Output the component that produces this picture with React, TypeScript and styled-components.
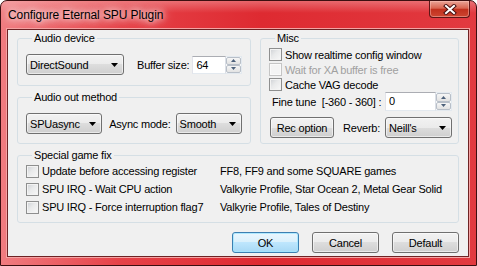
import { Fragment } from "react";
import styled, { createGlobalStyle } from "styled-components";

const GlobalStyle = createGlobalStyle`
    html, body {
        margin: 0;
        padding: 0;
        background: #fff;
    }
    body {
        font-family: "Liberation Sans", Arial, sans-serif;
        font-size: 11px;
        color: #000;
    }
`;

const Window = styled.div`
    width: 477px;
    height: 266px;
    box-sizing: border-box;
    display: flex;
    flex-direction: column;
    border: 1px solid #3c0f10;
    border-radius: 7px 7px 0 0;
    background:
        linear-gradient(to bottom, rgba(255, 255, 255, 0.28), rgba(255, 255, 255, 0) 12px),
        linear-gradient(to right, #f07c80 0%, #e64248 25%, #de2a31 55%, #e23a40 100%);
    overflow: hidden;
`;

const TitleBar = styled.div`
    height: 28px;
    flex: none;
    display: flex;
    align-items: flex-start;
    justify-content: space-between;
    padding-left: 7px;
`;

const Title = styled.div`
    font-size: 12px;
    letter-spacing: -0.1px;
    line-height: 28px;
    color: #000;
    text-shadow: 0 0 6px #fff, 0 0 10px rgba(255, 255, 255, 0.9), 0 0 14px rgba(255, 255, 255, 0.8);
`;

const CloseButton = styled.div`
    width: 41px;
    height: 17px;
    box-sizing: border-box;
    margin-right: 6px;
    display: flex;
    align-items: center;
    justify-content: center;
    border: 1px solid #5e1616;
    border-top: none;
    border-radius: 0 0 4px 4px;
    background: linear-gradient(to bottom, #eaa497 0%, #d96450 45%, #c2301d 52%, #cd4631 100%);
    box-shadow: inset 0 0 0 1px rgba(255, 200, 190, 0.45);
`;

const Client = styled.div`
    flex: 1;
    margin: 0 7px 8px 6px;
    padding: 2px 9px 0;
    display: flex;
    flex-direction: column;
    background: #f0f0f0;
    border: 1px solid #6e2224;
    box-shadow: 0 0 0 1px #f4a3a3;
`;

const Groups = styled.div`
    display: grid;
    grid-template-columns: 234px 199px;
    grid-template-rows: 54px 53px 74px;
    grid-template-areas:
        "dev misc"
        "out misc"
        "fix fix";
    column-gap: 9px;
    row-gap: 5px;
`;

const Group = styled.fieldset<{ $area: string; $top: number }>`
    grid-area: ${({ $area }) => $area};
    margin: 0;
    min-width: 0;
    box-sizing: border-box;
    padding: ${({ $top }) => $top}px 8px 0;
    border: 1px solid #d5dfe5;
    border-radius: 3px;
`;

const Legend = styled.legend`
    margin-left: 6px;
    padding: 0 2px;
    line-height: 13px;
    letter-spacing: -0.2px;
`;

const Row = styled.div`
    display: flex;
    align-items: center;
`;

const Label = styled.span<{ $gap?: number }>`
    margin-left: ${({ $gap }) => $gap ?? 0}px;
    letter-spacing: -0.2px;
    white-space: pre;
`;

const Combo = styled.div<{ $w: number; $gap?: number }>`
    width: ${({ $w }) => $w}px;
    height: 21px;
    box-sizing: border-box;
    margin-left: ${({ $gap }) => $gap ?? 0}px;
    display: flex;
    align-items: center;
    justify-content: space-between;
    padding: 0 5px 0 3px;
    border: 1px solid #707070;
    border-radius: 3px;
    background: linear-gradient(to bottom, #f2f2f2 0%, #ebebeb 50%, #dddddd 50%, #cfcfcf 100%);
    box-shadow: inset 0 0 0 1px rgba(255, 255, 255, 0.55);
    letter-spacing: -0.2px;
`;

const Edit = styled.div<{ $w: number; $h: number; $gap?: number }>`
    width: ${({ $w }) => $w}px;
    height: ${({ $h }) => $h}px;
    box-sizing: border-box;
    margin-left: ${({ $gap }) => $gap ?? 0}px;
    padding: 1px 3px 0;
    background: #fff;
    border: 1px solid;
    border-color: #abadb3 #dbdfe6 #e3e9ef #e2e3ea;
    letter-spacing: -0.2px;
    line-height: 14px;
`;

const Spin = styled.div<{ $h: number }>`
    width: 16px;
    height: ${({ $h }) => $h}px;
    box-sizing: border-box;
    display: flex;
    flex-direction: column;
    border: 1px solid #e3e9ef;
    border-left: none;
    background: #fff;
`;

const SpinHalf = styled.div`
    flex: 1;
    display: flex;
    align-items: center;
    justify-content: center;
    border: 1px solid #b8bfc8;
    border-radius: 2px;
    background: linear-gradient(to bottom, #f6f6f6, #e2e2e2);
`;

const CheckRow = styled.div<{ $h: number }>`
    height: ${({ $h }) => $h}px;
    display: flex;
    align-items: center;
`;

const Check = styled.span<{ $disabled?: boolean }>`
    width: 13px;
    height: 13px;
    box-sizing: border-box;
    flex: none;
    margin-right: 3px;
    border: 1px solid ${({ $disabled }) => ($disabled ? "#c5c5c5" : "#8e8f8f")};
    background: ${({ $disabled }) =>
        $disabled ? "#f4f4f4" : "linear-gradient(135deg, #cdd0d4 0%, #e9eaeb 45%, #f8f8f8 100%)"};
    box-shadow: inset 0 0 0 1px ${({ $disabled }) => ($disabled ? "#fafafa" : "#f3f3f3")};
`;

const CheckText = styled.span<{ $disabled?: boolean }>`
    letter-spacing: -0.2px;
    color: ${({ $disabled }) => ($disabled ? "#a0a0a0" : "#000")};
    white-space: nowrap;
`;

const MiscGrid = styled.div`
    display: grid;
    grid-template-columns: 116px 67px;
    grid-template-rows: 19px 21px;
    row-gap: 6px;
    align-items: center;
`;

const FixGrid = styled.div`
    display: grid;
    grid-template-columns: 194px 1fr;
`;

const Note = styled.span`
    display: flex;
    align-items: center;
    letter-spacing: -0.2px;
    white-space: nowrap;
`;

const Button = styled.div<{ $w: number; $primary?: boolean; $gap?: number }>`
    width: ${({ $w }) => $w}px;
    height: 21px;
    box-sizing: border-box;
    margin-left: ${({ $gap }) => $gap ?? 0}px;
    display: flex;
    align-items: center;
    justify-content: center;
    border: 1px solid ${({ $primary }) => ($primary ? "#3c7fb1" : "#707070")};
    border-radius: 3px;
    background: ${({ $primary }) =>
        $primary
            ? "linear-gradient(to bottom, #eaf6fd 0%, #d9f0fc 50%, #bee6fd 50%, #a7d9f5 100%)"
            : "linear-gradient(to bottom, #f2f2f2 0%, #ebebeb 50%, #dddddd 50%, #cfcfcf 100%)"};
    box-shadow: inset 0 0 0 1px ${({ $primary }) => ($primary ? "rgba(160, 230, 255, 0.8)" : "rgba(255, 255, 255, 0.55)")};
    letter-spacing: -0.2px;
`;

const ButtonRow = styled.div`
    display: flex;
    justify-content: flex-end;
    gap: 13px;
    margin-top: 9px;
`;

const Arrow = () => (
    <svg width="7" height="4" viewBox="0 0 7 4">
        <path d="M0 0h7L3.5 4z" fill="#000" />
    </svg>
);

const SpinArrow = ({ up }: { up?: boolean }) => (
    <svg width="5" height="3" viewBox="0 0 5 3">
        <path d={up ? "M0 3h5L2.5 0z" : "M0 0h5L2.5 3z"} fill="#4c607a" />
    </svg>
);

const SpinBox = ({ h }: { h: number }) => (
    <Spin $h={h}>
        <SpinHalf>
            <SpinArrow up />
        </SpinHalf>
        <SpinHalf>
            <SpinArrow />
        </SpinHalf>
    </Spin>
);

const CloseIcon = () => (
    <svg width="14" height="11" viewBox="0 0 14 11">
        <path d="M3 2l8 7M11 2l-8 7" stroke="#4a1010" strokeWidth="4" strokeLinecap="square" />
        <path d="M3 2l8 7M11 2l-8 7" stroke="#fff" strokeWidth="2" strokeLinecap="square" />
    </svg>
);

const fixes = [
    ["Update before accessing register", "FF8, FF9 and some SQUARE games"],
    ["SPU IRQ - Wait CPU action", "Valkyrie Profile, Star Ocean 2, Metal Gear Solid"],
    ["SPU IRQ - Force interruption flag7", "Valkyrie Profile, Tales of Destiny"],
];

const App = () => {
    return (
        <>
            <GlobalStyle />
            <Window>
                <TitleBar>
                    <Title>Configure Eternal SPU Plugin</Title>
                    <CloseButton>
                        <CloseIcon />
                    </CloseButton>
                </TitleBar>
                <Client>
                    <Groups>
                        <Group $area="dev" $top={9}>
                            <Legend>Audio device</Legend>
                            <Row>
                                <Combo $w={99}>
                                    DirectSound
                                    <Arrow />
                                </Combo>
                                <Label $gap={13}>Buffer size:</Label>
                                <Edit $w={34} $h={18} $gap={3}>64</Edit>
                                <SpinBox h={18} />
                            </Row>
                        </Group>

                        <Group $area="misc" $top={2}>
                            <Legend>Misc</Legend>
                            <CheckRow $h={15}>
                                <Check />
                                <CheckText>Show realtime config window</CheckText>
                            </CheckRow>
                            <CheckRow $h={15}>
                                <Check $disabled />
                                <CheckText $disabled>Wait for XA buffer is free</CheckText>
                            </CheckRow>
                            <CheckRow $h={15}>
                                <Check />
                                <CheckText>Cache VAG decode</CheckText>
                            </CheckRow>
                            <MiscGrid>
                                <Label $gap={3}>{"Fine tune  [-360 - 360] :"}</Label>
                                <Row>
                                    <Edit $w={51} $h={19}>0</Edit>
                                    <SpinBox h={19} />
                                </Row>
                                <Row>
                                    <Button $w={64} $gap={1}>Rec option</Button>
                                    <Label $gap={9}>Reverb:</Label>
                                </Row>
                                <Combo $w={67}>
                                    Neill's
                                    <Arrow />
                                </Combo>
                            </MiscGrid>
                        </Group>

                        <Group $area="out" $top={9}>
                            <Legend>Audio out method</Legend>
                            <Row>
                                <Combo $w={78}>
                                    SPUasync
                                    <Arrow />
                                </Combo>
                                <Label $gap={7}>Async mode:</Label>
                                <Combo $w={68} $gap={5}>
                                    Smooth
                                    <Arrow />
                                </Combo>
                            </Row>
                        </Group>

                        <Group $area="fix" $top={0}>
                            <Legend>Special game fix</Legend>
                            <FixGrid>
                                {fixes.map(([name, games]) => (
                                    <Fragment key={name}>
                                        <CheckRow $h={18}>
                                            <Check />
                                            <CheckText>{name}</CheckText>
                                        </CheckRow>
                                        <Note>{games}</Note>
                                    </Fragment>
                                ))}
                            </FixGrid>
                        </Group>
                    </Groups>

                    <ButtonRow>
                        <Button $w={67} $primary>OK</Button>
                        <Button $w={67}>Cancel</Button>
                        <Button $w={67}>Default</Button>
                    </ButtonRow>
                </Client>
            </Window>
        </>
    );
};

export default App;
